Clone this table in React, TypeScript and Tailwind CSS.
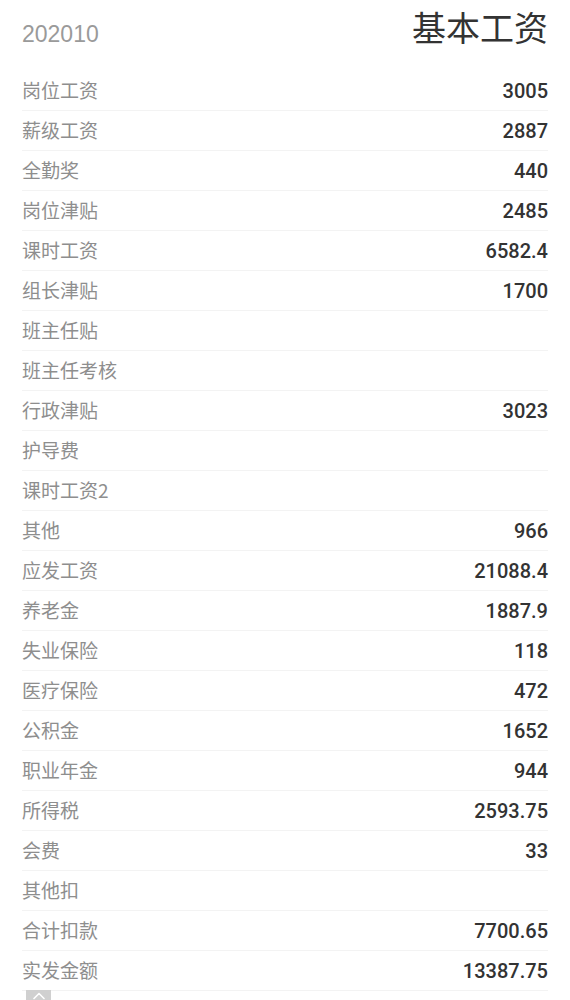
import React from 'react';

interface SalaryRow {
  label: string;
  value: string;
}

const rows: SalaryRow[] = [
  { label: '岗位工资', value: '3005' },
  { label: '薪级工资', value: '2887' },
  { label: '全勤奖', value: '440' },
  { label: '岗位津贴', value: '2485' },
  { label: '课时工资', value: '6582.4' },
  { label: '组长津贴', value: '1700' },
  { label: '班主任贴', value: '' },
  { label: '班主任考核', value: '' },
  { label: '行政津贴', value: '3023' },
  { label: '护导费', value: '' },
  { label: '课时工资2', value: '' },
  { label: '其他', value: '966' },
  { label: '应发工资', value: '21088.4' },
  { label: '养老金', value: '1887.9' },
  { label: '失业保险', value: '118' },
  { label: '医疗保险', value: '472' },
  { label: '公积金', value: '1652' },
  { label: '职业年金', value: '944' },
  { label: '所得税', value: '2593.75' },
  { label: '会费', value: '33' },
  { label: '其他扣', value: '' },
  { label: '合计扣款', value: '7700.65' },
  { label: '实发金额', value: '13387.75' },
];

const App: React.FC = () => {
  return (
    <div
      className="relative w-full h-[1000px] overflow-hidden bg-white"
      style={{ fontFamily: '"Noto Sans CJK SC", sans-serif' }}
    >
      <div className="flex items-center justify-between px-[22px] h-[71px] pb-[10px]">
        <span className="pt-[8px] text-[23px] text-[#9a9a9a] leading-none font-['Liberation_Sans']">202010</span>
        <span className="pb-[8px] text-[34px] text-[#333333] leading-none">基本工资</span>
      </div>

      <div>
        {rows.map((row) => (
          <div key={row.label} className="mx-[22px] h-[40px] flex items-center justify-between border-b border-[#f3f3f3]">
            <span className="pb-[2px] text-[19px] leading-none text-[#8e8e8e]">{row.label}</span>
            <span className="text-[20px] leading-none font-medium text-[#333333] font-['Roboto']">{row.value}</span>
          </div>
        ))}
      </div>

      <div className="absolute left-[26px] top-[990px] w-[25px] h-[25px] bg-[#d0d0d0] flex items-start justify-center pt-[2px]">
        <svg width="12" height="8" viewBox="0 0 12 8" fill="none">
          <path d="M1 6.5 L6 1.5 L11 6.5" stroke="#ffffff" strokeWidth="1.6" strokeLinecap="round" strokeLinejoin="round" />
        </svg>
      </div>
    </div>
  );
};

export default App;
